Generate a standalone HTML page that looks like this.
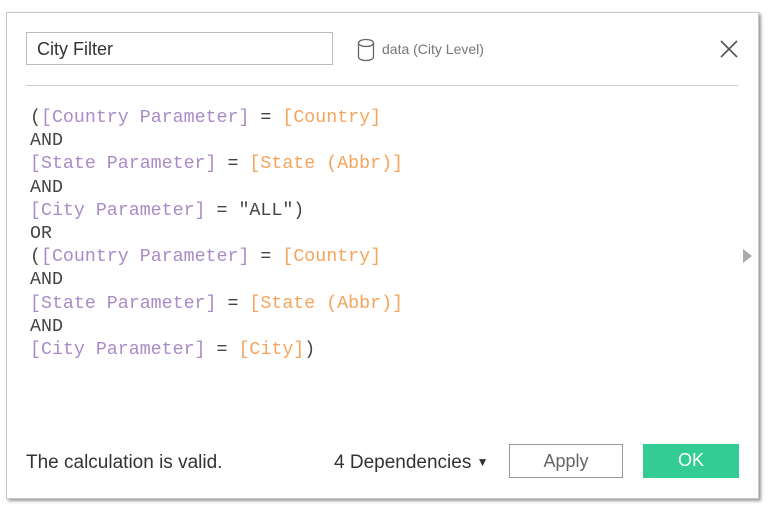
<!DOCTYPE html>
<html><head><style>
body{margin:0;width:768px;height:508px;background:#fff;position:relative;font-family:"Liberation Sans",sans-serif;overflow:hidden}
.dlg{position:absolute;left:6px;top:12px;width:751px;height:485px;border:1px solid #c8c8c8;box-shadow:2px 2px 3px #999;background:#fff}
.name{position:absolute;left:26px;top:32px;width:307px;height:33px;border:1px solid #bbb;box-sizing:border-box;font-size:18px;color:#333;padding:6px 10px}
.ds{position:absolute;left:382px;top:41px;font-size:14px;color:#777}
.hr{position:absolute;left:26px;top:85px;width:712px;height:1px;background:#ccc}
.code{position:absolute;left:30px;top:107px;font-family:"Liberation Mono",monospace;font-size:18.3px;line-height:23.2px;color:#444;white-space:pre}
.p{color:#a98bc6}.o{color:#f5a45c}
.foot{position:absolute;top:452px;font-size:19px;color:#333}
.btn{position:absolute;top:444px;height:34px;width:114px;box-sizing:border-box;text-align:center;line-height:32px;font-size:18px}
</style></head><body>
<div class="dlg"></div>
<div class="name">City Filter</div>
<svg style="position:absolute;left:357px;top:38px" width="18" height="24" viewBox="0 0 18 24"><ellipse cx="9" cy="5" rx="7.5" ry="3.5" fill="none" stroke="#666" stroke-width="1.3"/><path d="M1.5 5V19A7.5 3.5 0 0 0 16.5 19V5" fill="none" stroke="#666" stroke-width="1.3"/></svg>
<div class="ds">data (City Level)</div>
<svg style="position:absolute;left:720px;top:40px" width="18" height="18"><path d="M1 1L17 17M17 1L1 17" stroke="#555" stroke-width="1.6"/></svg>
<div class="hr"></div>
<div class="code">(<span class="p">[Country Parameter]</span> = <span class="o">[Country]</span>
AND
<span class="p">[State Parameter]</span> = <span class="o">[State (Abbr)]</span>
AND
<span class="p">[City Parameter]</span> = "ALL")
OR
(<span class="p">[Country Parameter]</span> = <span class="o">[Country]</span>
AND
<span class="p">[State Parameter]</span> = <span class="o">[State (Abbr)]</span>
AND
<span class="p">[City Parameter]</span> = <span class="o">[City]</span>)</div>
<svg style="position:absolute;left:743px;top:249px" width="10" height="14"><path d="M0 0L9 7L0 14Z" fill="#aaa"/></svg>
<div class="foot" style="left:26px">The calculation is valid.</div>
<div class="foot" style="left:334px">4 Dependencies <span style="font-size:12px;position:relative;top:-2px">▼</span></div>
<div class="btn" style="left:509px;border:1px solid #999;color:#666">Apply</div>
<div class="btn" style="left:643px;width:96px;background:#33cc94;color:#fff">OK</div>
</body></html>
